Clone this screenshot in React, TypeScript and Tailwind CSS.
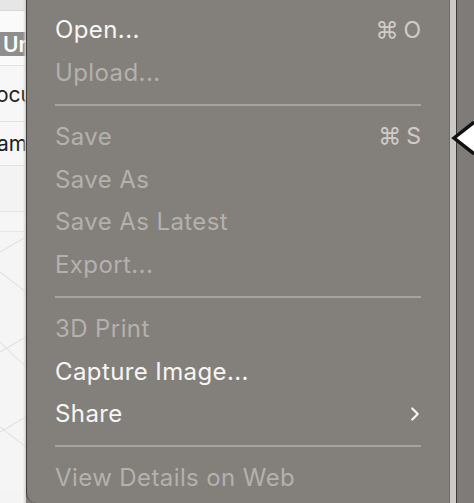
import { ChevronRight } from "lucide-react";

type Item =
  | { kind: "item"; label: string; enabled?: boolean; shortcut?: string; submenu?: boolean }
  | { kind: "sep" };

const items: Item[] = [
  { kind: "item", label: "Open...", enabled: true, shortcut: "O" },
  { kind: "item", label: "Upload..." },
  { kind: "sep" },
  { kind: "item", label: "Save", shortcut: "S" },
  { kind: "item", label: "Save As" },
  { kind: "item", label: "Save As Latest" },
  { kind: "item", label: "Export..." },
  { kind: "sep" },
  { kind: "item", label: "3D Print" },
  { kind: "item", label: "Capture Image...", enabled: true },
  { kind: "item", label: "Share", enabled: true, submenu: true },
  { kind: "sep" },
  { kind: "item", label: "View Details on Web" },
];

function SideList() {
  return (
    <div className="relative w-[26px] shrink-0 bg-[#f4f4f4] overflow-hidden text-[21px] font-['Inter',sans-serif] leading-none">
      <div className="h-[11px] bg-[#e6e6e6] border-b border-[#d6d6d6]" />
      <div className="h-[21px] bg-[#fafafa]" />
      <div className="h-[24px] bg-[#8f8e8c] flex items-center text-white font-semibold pl-[3px]">Un</div>
      <div className="h-[10px] bg-[#fafafa] border-b border-[#e2e2e2]" />
      <div className="h-[56px] bg-[#f7f7f7] flex items-center text-[#1e1e1e] -ml-[4px] border-b border-[#e2e2e2] pt-[2px]">ocu</div>
      <div className="h-[44px] bg-[#f7f7f7] flex items-center text-[#1e1e1e] -ml-[3px] border-b border-[#e2e2e2]">am</div>
      <div className="h-[46px] bg-[#f3f3f3] border-b border-[#e6e6e6]" />
      <div className="h-[20px] bg-[#f6f6f6] border-b border-[#e6e6e6]" />
      <svg className="block" width="26" height="260" viewBox="0 0 26 260">
        <rect width="26" height="260" fill="#f5f5f5" />
        <g stroke="#dcdcdc" strokeWidth="1" fill="none">
          <path d="M0 20 L26 5" />
          <path d="M0 40 L26 60" />
          <path d="M0 120 L26 105" />
          <path d="M0 110 L26 135" />
          <path d="M0 200 L26 185" />
          <path d="M0 195 L26 215" />
        </g>
      </svg>
      <div className="absolute right-0 top-0 bottom-0 w-[3px] bg-gradient-to-r from-transparent to-[#cfcfcf]" />
    </div>
  );
}

function Menu() {
  return (
    <div className="w-[423px] shrink-0 h-[503px] bg-[#837f7b] border-l border-[#3e3c3a] rounded-bl-[10px] pt-[9px] px-[28px] font-['Inter',sans-serif] text-[24px] leading-none tracking-[0.4px]">
      {items.map((it, i) =>
        it.kind === "sep" ? (
          <div key={i} className="h-[21.33px] flex items-center">
            <div className="h-[2px] w-full bg-[#a7a4a0]" />
          </div>
        ) : (
          <div key={i} className="h-[42.67px] flex items-center justify-between">
            <span className={it.enabled ? "text-[#f7f6f5]" : "text-[#b4b1ad]"}>{it.label}</span>
            {it.shortcut && (
              <span className="flex items-center gap-[5px] text-[#cfccc8] text-[23px] tracking-normal">
                <span className="text-[23px]">⌘</span>
                <span>{it.shortcut}</span>
              </span>
            )}
            {it.submenu && (
              <ChevronRight className="w-[22px] h-[22px] text-[#f7f6f5] -mr-[5px]" strokeWidth={2.4} />
            )}
          </div>
        )
      )}
    </div>
  );
}

export default function App() {
  return (
    <div className="relative w-[474px] h-[503px] flex overflow-hidden bg-[#7f7c79]">
      <SideList />
      <Menu />
      <div className="w-[1px] shrink-0 bg-[#6f6c69]" />
      <div className="w-[6px] shrink-0 bg-[#cbcac8]" />
      <div className="w-[1px] shrink-0 bg-[#3a3938]" />
      <div className="flex-1 bg-[#7e7b78]" />
      <svg className="absolute left-[451px] top-[120px]" width="40" height="36" viewBox="0 0 40 36">
        <path d="M3 18 L22 3 L40 3 L40 33 L22 33 Z" fill="#ffffff" stroke="#111111" strokeWidth="3.5" strokeLinejoin="miter" />
      </svg>
    </div>
  );
}
